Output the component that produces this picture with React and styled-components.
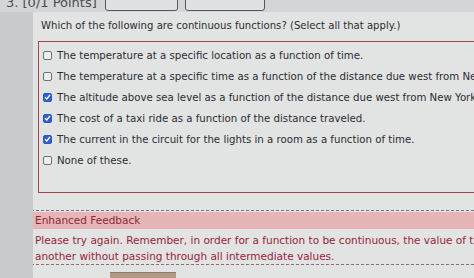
import React from 'react'
import styled, { createGlobalStyle } from 'styled-components'

const Global = createGlobalStyle`
  html, body { margin: 0; padding: 0; background: #d2d4d5; }
  body { font-family: "DejaVu Sans", Verdana, sans-serif; }
`

const options = [
  { text: 'The temperature at a specific location as a function of time.', checked: false },
  { text: 'The temperature at a specific time as a function of the distance due west from New York City.', checked: false },
  { text: 'The altitude above sea level as a function of the distance due west from New York City.', checked: true },
  { text: 'The cost of a taxi ride as a function of the distance traveled.', checked: true },
  { text: 'The current in the circuit for the lights in a room as a function of time.', checked: true },
  { text: 'None of these.', checked: false },
]

function Check({ checked }) {
  return (
    <Box checked={checked}>
      {checked && (
        <svg width="8" height="8" viewBox="0 0 8 8">
          <path d="M1.2 4.2 L3.2 6.2 L6.9 1.5" fill="none" stroke="#fff" strokeWidth="1.6" />
        </svg>
      )}
    </Box>
  )
}

function App() {
  return (
    <Page>
      <Global />
      <TopBar>
        <Title>3. [0/1 Points]</Title>
        <TopButton w={71} />
        <TopButton w={78} />
      </TopBar>
      <Body>
        <Gutter />
        <Panel>
          <Question>Which of the following are continuous functions? (Select all that apply.)</Question>
          <Answers>
            {options.map((o, i) => (
              <Option key={i}>
                <Check checked={o.checked} />
                <span>{o.text}</span>
              </Option>
            ))}
          </Answers>
          <Feedback>
            <FeedbackHead>Enhanced Feedback</FeedbackHead>
            <FeedbackText>
              Please try again. Remember, in order for a function to be continuous, the value of the function cannot jump from one value to
              <br />
              another without passing through all intermediate values.
            </FeedbackText>
          </Feedback>
          <Footer>
            <FooterButton />
          </Footer>
        </Panel>
      </Body>
    </Page>
  )
}

const Page = styled.div`
  width: 474px;
  height: 278px;
  overflow: hidden;
  display: flex;
  flex-direction: column;
  background: #d2d4d5;
`

const TopBar = styled.div`
  height: 12px;
  flex: none;
  display: flex;
  align-items: flex-end;
  gap: 7px;
  padding-left: 6px;
  overflow: hidden;
  background: #d3d5d6;
`

const Title = styled.div`
  width: 92px;
  font-size: 13px;
  line-height: 13px;
  margin-bottom: 3px;
  color: #4a4c50;
  white-space: nowrap;
`

const TopButton = styled.div`
  width: ${p => p.w}px;
  height: 20px;
  border: 1px solid #55585c;
  border-radius: 3px;
  background: #dfe1e2;
  transform: translateY(-1px);
`

const Body = styled.div`
  flex: 1;
  display: flex;
  min-height: 0;
`

const Gutter = styled.div`
  width: 33px;
  flex: none;
  background: #c8cacb;
`

const Panel = styled.div`
  flex: 1;
  min-width: 0;
  background: #e2e4e4;
  padding-left: 5px;
  display: flex;
  flex-direction: column;
  overflow: hidden;
`

const Question = styled.div`
  font-size: 10.1px;
  line-height: 14px;
  color: #2a2c30;
  padding-left: 3px;
  height: 21px;
  display: flex;
  align-items: flex-end;
  white-space: nowrap;
`

const Answers = styled.div`
  margin: 8px -20px 0 0;
  height: 152px;
  box-sizing: border-box;
  border: 1px solid #a3474f;
  padding: 6px 0 0 4px;
  display: flex;
  flex-direction: column;
  gap: 7px;
`

const Option = styled.div`
  display: flex;
  align-items: center;
  gap: 5px;
  height: 14px;
  font-size: 10.2px;
  color: #2a2c31;
  white-space: nowrap;
`

const Box = styled.div`
  width: 9px;
  height: 9px;
  flex: none;
  box-sizing: border-box;
  border-radius: 2px;
  border: 1px solid ${p => (p.checked ? '#2b55c9' : '#6c6f74')};
  background: ${p => (p.checked ? '#2f5fd6' : '#eceeee')};
  display: flex;
  align-items: center;
  justify-content: center;
`

const Feedback = styled.div`
  margin: 17px -20px 0 -7px;
  border: 1px dashed #8c6a78;
  padding: 1px 0 0;
`

const FeedbackHead = styled.div`
  background: #e6b5b8;
  color: #8e2a36;
  font-size: 10.5px;
  line-height: 17px;
  padding-left: 3px;
  white-space: nowrap;
`

const FeedbackText = styled.div`
  color: #9a2336;
  font-size: 10.5px;
  line-height: 16px;
  padding: 3px 0 0 3px;
  white-space: nowrap;
`

const Footer = styled.div`
  flex: 1;
  display: flex;
  padding-left: 72px;
  align-items: flex-end;
`

const FooterButton = styled.div`
  width: 66px;
  height: 5px;
  background: #b49a86;
  border-top: 1px solid #8c7a6c;
`

export default App
